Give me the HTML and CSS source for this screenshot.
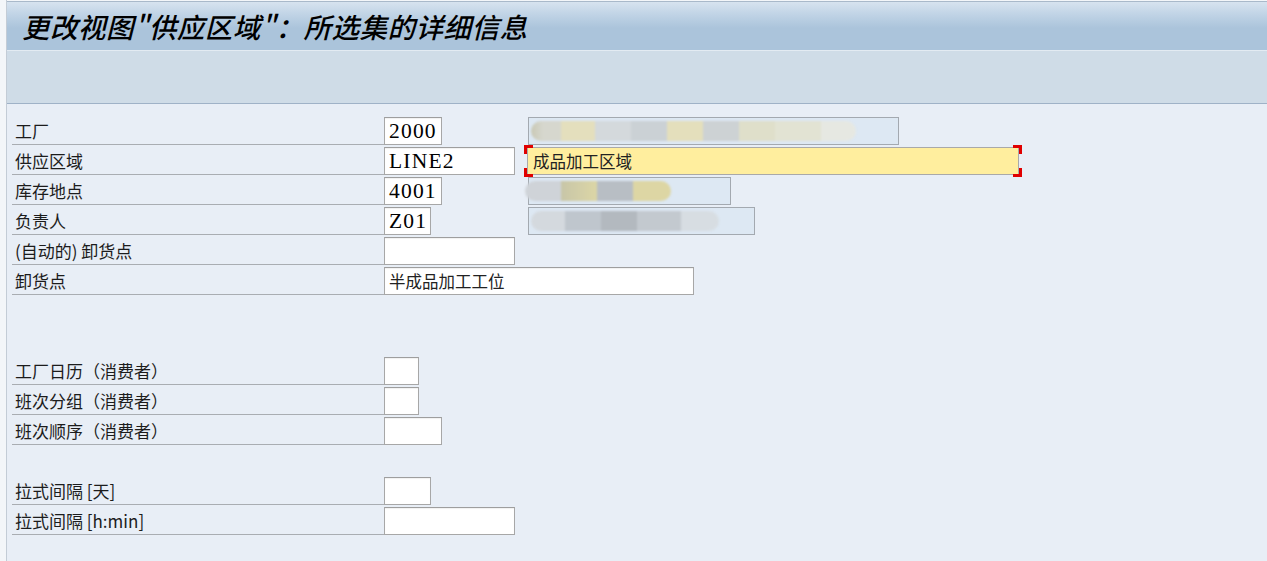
FILE: index.html
```html
<!DOCTYPE html>
<html lang="zh-CN">
<head>
<meta charset="utf-8">
<title>更改视图"供应区域"：所选集的详细信息</title>
<link rel="stylesheet" href="styles.css">
</head>
<body>
<div class="frame">
  <div class="edge"></div>
  <div class="main">
    <div class="titlebar"><h1 class="title">更改视图"供应区域"：所选集的详细信息</h1></div>
    <div class="toolbar"></div>
    <div class="content">
      <div class="row">
        <div class="label">工厂</div>
        <div class="incol"><div class="field mono w58">2000</div></div>
        <div class="desc w371">
          <div class="blob b1"></div>
        </div>
      </div>
      <div class="row">
        <div class="label">供应区域</div>
        <div class="incol"><div class="field mono w131">LINE2</div></div>
        <div class="desc focus w492">成品加工区域<span class="c tl"></span><span class="c tr"></span><span class="c bl"></span><span class="c br"></span></div>
      </div>
      <div class="row">
        <div class="label">库存地点</div>
        <div class="incol"><div class="field mono w58">4001</div></div>
        <div class="desc w203">
          <div class="blob b3"></div>
        </div>
      </div>
      <div class="row">
        <div class="label">负责人</div>
        <div class="incol"><div class="field mono w47">Z01</div></div>
        <div class="desc w227">
          <div class="blob b4"></div>
        </div>
      </div>
      <div class="row">
        <div class="label">(自动的) 卸货点</div>
        <div class="incol"><div class="field w131"></div></div>
      </div>
      <div class="row">
        <div class="label">卸货点</div>
        <div class="incol wide"><div class="field cjk w310">半成品加工工位</div></div>
      </div>
      <div class="spacer two"></div>
      <div class="row">
        <div class="label">工厂日历（消费者）</div>
        <div class="incol"><div class="field w35"></div></div>
      </div>
      <div class="row">
        <div class="label">班次分组（消费者）</div>
        <div class="incol"><div class="field w35"></div></div>
      </div>
      <div class="row">
        <div class="label">班次顺序（消费者）</div>
        <div class="incol"><div class="field w58"></div></div>
      </div>
      <div class="spacer"></div>
      <div class="row">
        <div class="label">拉式间隔 [天]</div>
        <div class="incol"><div class="field w47"></div></div>
      </div>
      <div class="row">
        <div class="label">拉式间隔 [h:min]</div>
        <div class="incol"><div class="field w131"></div></div>
      </div>
    </div>
  </div>
</div>
</body>
</html>
```

FILE: styles.css
```css
html, body {
  margin: 0;
  padding: 0;
  height: 100%;
}
body {
  background: #e8eef6;
  font-family: "Noto Sans CJK SC", "Liberation Sans", sans-serif;
  color: #1c1c1c;
  overflow: hidden;
}
.frame {
  display: flex;
  height: 561px;
  background: #f3f6f9;
}
.edge {
  width: 6px;
  flex: none;
  border-right: 1px solid #c3ccd6;
}
.main {
  flex: 1;
  display: flex;
  flex-direction: column;
  margin-top: 1px;
  background: #e8eef6;
}
.titlebar {
  height: 48px;
  border-top: 1px solid #a9b9ca;
  border-bottom: 1px solid #e3ebf2;
  background: linear-gradient(to bottom, #d7e3ef 0px, #c1d4e6 12px, #abc4db 26px, #abc4db 100%);
  display: flex;
  align-items: center;
}
.title {
  margin: 1px 0 0 15px;
  font-family: "Noto Sans CJK SC", sans-serif;
  font-size: 27.5px;
  font-weight: 500;
  font-style: italic;
  color: #000;
  line-height: 1;
  letter-spacing: 0.5px;
}
.toolbar {
  height: 52px;
  background: #cfdce7;
  border-bottom: 1px solid #9fb2c7;
}
.content {
  padding: 11px 0 0 5px;
}
.row {
  display: flex;
  align-items: flex-end;
  height: 30px;
}
.spacer { height: 30px; }
.spacer.two { height: 60px; }
.label {
  width: 372px;
  height: 30px;
  flex: none;
  box-sizing: border-box;
  border-bottom: 1px solid #a9adb2;
  padding: 2px 0 0 3px;
  display: flex;
  align-items: center;
  font-size: 17px;
  line-height: 1;
  color: #1c1c1c;
  white-space: nowrap;
}
.incol {
  width: 144px;
  flex: none;
  display: flex;
}
.incol.wide { width: 400px; }
.field {
  height: 28px;
  box-sizing: border-box;
  border: 1px solid #a7a7a7;
  border-top-color: #9e9e9e;
  background: #fff;
  box-shadow: inset 0 1px 1px rgba(0,0,0,0.06);
  padding: 0 0 0 4px;
  display: flex;
  align-items: center;
  white-space: nowrap;
  overflow: hidden;
}
.mono {
  font-family: "Liberation Serif", serif;
  font-size: 21.5px;
  letter-spacing: 1.2px;
  color: #000;
  padding-top: 1px;
}
.cjk {
  font-size: 16.5px;
  color: #222;
}
.w35 { width: 35px; }
.w47 { width: 47px; }
.w58 { width: 58px; }
.w131 { width: 131px; }
.w310 { width: 310px; }
.w203 { width: 203px; }
.w227 { width: 227px; }
.w371 { width: 371px; }
.w492 { width: 492px; }
.desc {
  height: 28px;
  box-sizing: border-box;
  border: 1px solid #a3a9b0;
  background: #dde8f3;
  position: relative;
  display: flex;
  align-items: center;
  padding-left: 2px;
  flex: none;
}
.desc.focus {
  margin-left: -1px;
  background: #ffee9e;
  border-color: #a9a9a9;
  font-size: 16.5px;
  color: #222;
  padding-left: 5px;
}
.c {
  position: absolute;
  width: 9px;
  height: 9px;
  box-sizing: border-box;
  border: 0 solid #e00000;
}
.c.tl { top: -3px; left: -4px; border-top-width: 3px; border-left-width: 3px; }
.c.tr { top: -3px; right: -4px; border-top-width: 3px; border-right-width: 3px; }
.c.bl { bottom: -3px; left: -4px; border-bottom-width: 3px; border-left-width: 3px; }
.c.br { bottom: -3px; right: -4px; border-bottom-width: 3px; border-right-width: 3px; }
.blob {
  height: 20px;
  border-radius: 10px;
  filter: blur(1.2px);
}
.b1 {
  width: 325px;
  background: linear-gradient(to right,
    #c9c8b4 0, #d6d7ce 12px, #d6d7ce 30px,
    #e4dfbd 30px, #e4dfbd 64px,
    #d4d9dc 64px, #d4d9dc 100px,
    #cbd1d5 100px, #cbd1d5 136px,
    #e4dfbc 136px, #e4dfbc 172px,
    #cdd2d4 172px, #cdd2d4 208px,
    #dfdfca 208px, #dfdfca 244px,
    #e2e3d3 244px, #e2e3d3 290px,
    #e6e8e2 290px);
}
.b3 {
  width: 146px;
  margin-left: -6px;
  background: linear-gradient(to right,
    #cfd3d8 0, #cfd3d8 36px,
    #c8c6a8 36px, #dcd6a6 72px,
    #b8bec4 72px, #b8bec4 108px,
    #ddd6a4 108px);
}
.b4 {
  width: 188px;
  background: linear-gradient(to right,
    #d4d9de 0, #d4d9de 34px,
    #bfc6cd 34px, #bfc6cd 70px,
    #b3b9bf 70px, #b3b9bf 106px,
    #c3c9cf 106px, #c3c9cf 150px,
    #d7dde2 150px);
}
```
